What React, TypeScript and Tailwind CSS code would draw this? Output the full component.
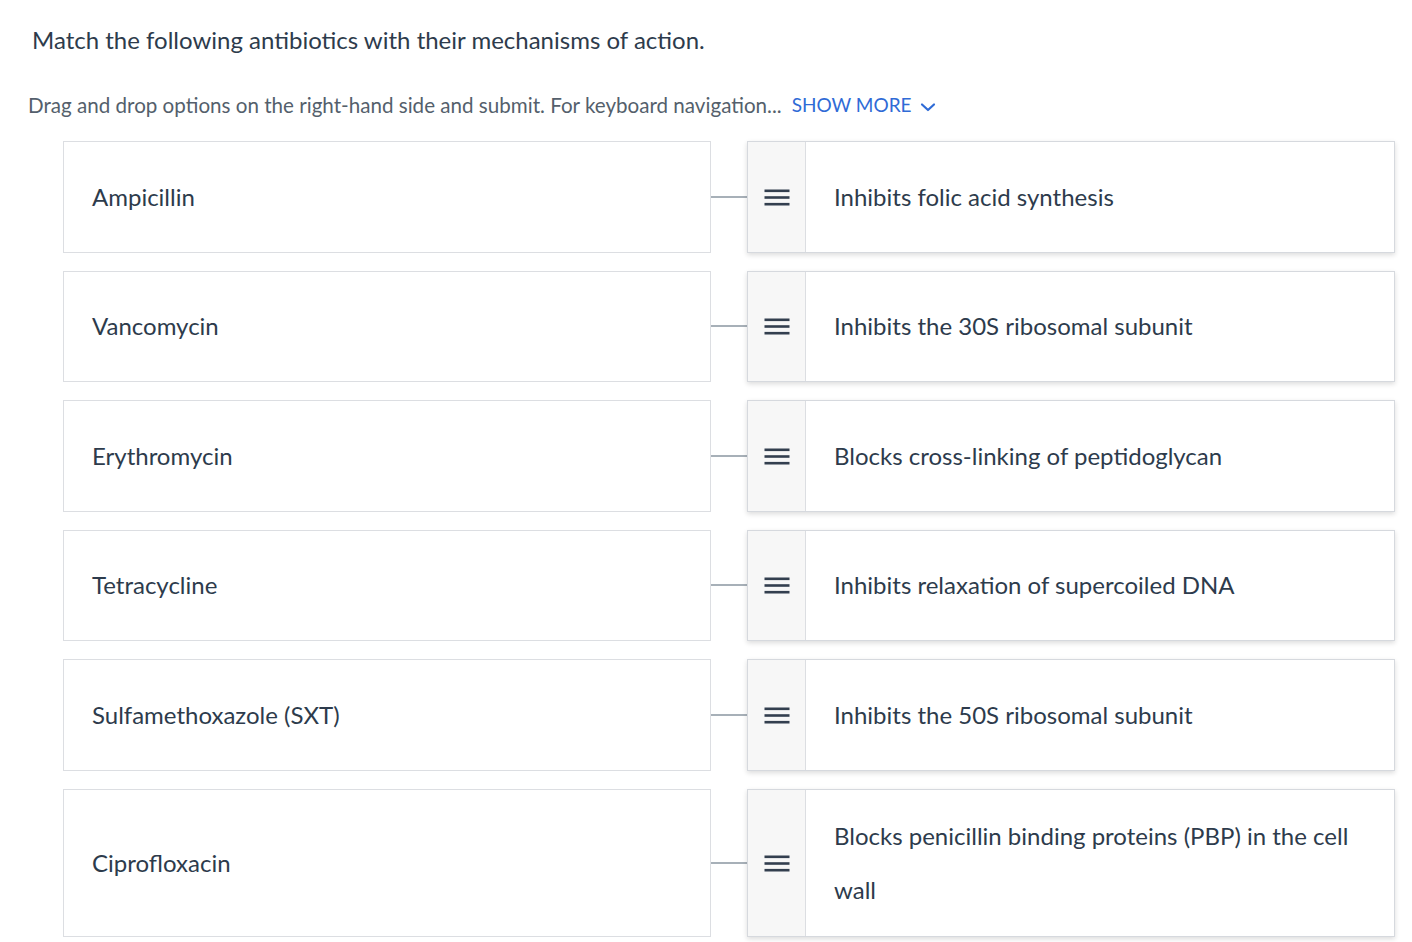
import React from "react";

const rows = [
  ["Ampicillin", "Inhibits folic acid synthesis"],
  ["Vancomycin", "Inhibits the 30S ribosomal subunit"],
  ["Erythromycin", "Blocks cross-linking of peptidoglycan"],
  ["Tetracycline", "Inhibits relaxation of supercoiled DNA"],
  ["Sulfamethoxazole (SXT)", "Inhibits the 50S ribosomal subunit"],
  ["Ciprofloxacin", "Blocks penicillin binding proteins (PBP) in the cell wall"],
];

function Hamburger() {
  return (
    <svg width="26" height="18" viewBox="0 0 26 18" className="block">
      <rect x="0.5" y="1.5" width="25" height="2.6" fill="#333f4f" />
      <rect x="0.5" y="8.2" width="25" height="2.6" fill="#333f4f" />
      <rect x="0.5" y="14.9" width="25" height="2.6" fill="#333f4f" />
    </svg>
  );
}

export default function App() {
  return (
    <div
      className="min-h-screen bg-white text-[#2d3b4c]"
      style={{ fontFamily: "'Source Sans Pro', Lato, 'Liberation Sans', sans-serif" }}
    >
      <div className="pl-[32px] pt-[25px] text-[24px] leading-[30px] text-[#2d3b4c]">
        Match the following antibiotics with their mechanisms of action.
      </div>
      <div className="mt-[38px] flex items-center pl-[28px] text-[20.6px] leading-[24px] text-[#545f6c]">
        <span>Drag and drop options on the right-hand side and submit. For keyboard navigation...</span>
        <span className="ml-[10px] flex items-center text-[19px] text-[#2f6bd6]">
          SHOW MORE
          <svg width="16" height="12" viewBox="0 0 16 12" className="ml-[8px] mt-[3px]">
            <path d="M2 3.5 L8 9 L14 3.5" fill="none" stroke="#2f6bd6" strokeWidth="2.2" strokeLinecap="round" strokeLinejoin="round" />
          </svg>
        </span>
      </div>
      <div className="mt-[24px] flex flex-col gap-[18px] pl-[63px] pr-[17px]">
        {rows.map(([l, r], i) => (
          <div key={i} className="flex items-stretch">
            <div className="flex w-[648px] items-center border border-[#dcdee2] pl-[28px] text-[24px] text-[#2d3b4c]">
              {l}
            </div>
            <div className="flex w-[36px] items-center">
              <div className="h-[2px] w-full bg-[#a7b0b8]" />
            </div>
            <div className="flex w-[648px] border border-[#d6d9de] bg-white shadow-[0_2px_5px_rgba(0,0,0,0.14)]">
              <div className="flex w-[58px] shrink-0 items-center justify-center border-r border-[#dcdee2] bg-[#f7f7f7]">
                <Hamburger />
              </div>
              <div className="flex min-h-[109.5px] flex-1 items-center py-[19px] pl-[28px] pr-[24px] text-[24px] leading-[54px] text-[#2d3b4c]">
                {r}
              </div>
            </div>
          </div>
        ))}
      </div>
    </div>
  );
}
